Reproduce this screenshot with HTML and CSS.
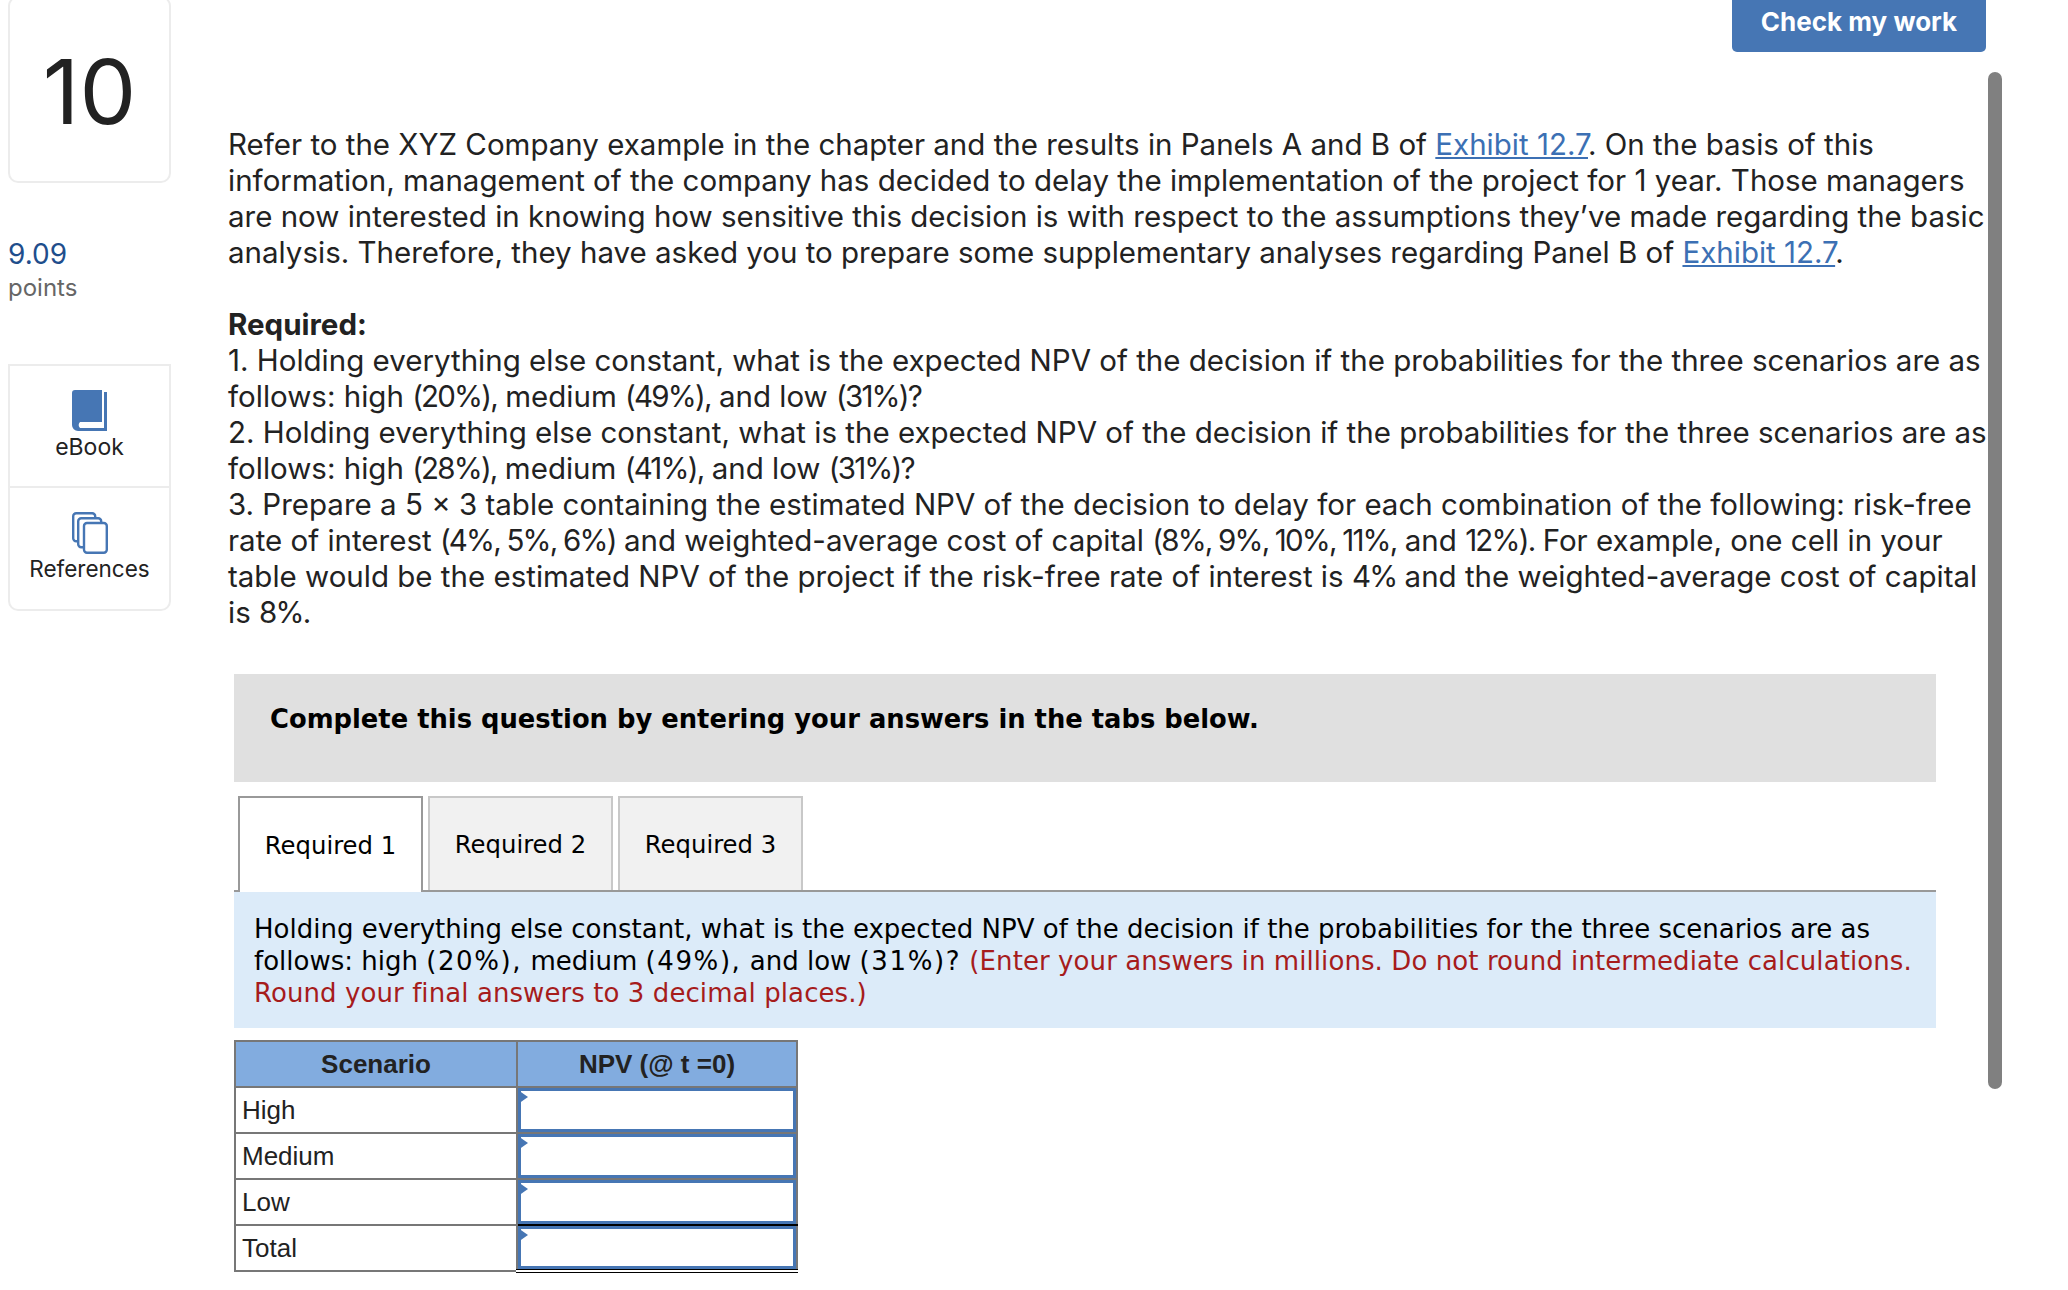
FILE: index.html
```html
<!DOCTYPE html>
<html>
<head>
    <meta name="viewport" content="width=device-width, initial-scale=1.0">
    <title>Question 10</title>
    <link rel="stylesheet" href="styles.css">
</head>
<body>
    <div class="page">
        <div class="side">
            <div class="qnum">10</div>
            <div class="pts">9.09</div>
            <div class="pts-label">points</div>
            <div class="tools">
                <div class="tool tool-first">
                    <svg class="tool-icon" width="36" height="42" viewBox="0 0 36 42">
                        <path d="M3 0h27v32H8a4.500 4.500 0 0 0 0 6h24V2h3v39H6a6 6 0 0 1-6-6V3a3 3 0 0 1 3-3z" fill="#4676b4"/>
                    </svg>
                    <span>eBook</span>
                </div>
                <div class="tool">
                    <svg class="tool-icon" width="36" height="42" viewBox="0 0 36 42" fill="#fff" stroke="#4676b4" stroke-width="2.400">
                        <rect x="1.200" y="1.200" width="22" height="28" rx="3"/>
                        <rect x="6.200" y="6.200" width="23" height="29" rx="3"/>
                        <rect x="12" y="11" width="22.800" height="29.800" rx="3"/>
                    </svg>
                    <span>References</span>
                </div>
            </div>
        </div>

        <div class="main">
            <div class="topbar">
                <button class="check">Check my work</button>
            </div>

            <div class="prompt">
                Refer to the XYZ Company example in the chapter and the results in Panels A and B of <a href="#">Exhibit 12.7</a>. On the basis of this<br>
                information, management of the company has decided to delay the implementation of the project for 1 year. Those managers<br>
                are now interested in knowing how sensitive this decision is with respect to the assumptions they’ve made regarding the basic<br>
                analysis. Therefore, they have asked you to prepare some supplementary analyses regarding Panel B of <a href="#">Exhibit 12.7</a>.<br>
                <br>
                <b>Required:</b><br>
                1. Holding everything else constant, what is the expected NPV of the decision if the probabilities for the three scenarios are as<br>
                follows: high <span class="n">(20%),</span> medium <span class="n">(49%),</span> and low <span class="n">(31%)?</span><br>
                2. Holding everything else constant, what is the expected NPV of the decision if the probabilities for the three scenarios are as<br>
                follows: high <span class="n">(28%),</span> medium <span class="n">(41%),</span> and low <span class="n">(31%)?</span><br>
                3. Prepare a 5 × 3 table containing the estimated NPV of the decision to delay for each combination of the following: risk-free<br>
                rate of interest <span class="n">(4%, 5%, 6%)</span> and weighted-average cost of capital <span class="n">(8%, 9%, 10%, 11%,</span> and <span class="n">12%).</span> For example, one cell in your<br>
                table would be the estimated NPV of the project if the risk-free rate of interest is <span class="n">4%</span> and the weighted-average cost of capital<br>
                is <span class="n">8%.</span>
            </div>

            <div class="work">
                <div class="notice">Complete this question by entering your answers in the tabs below.</div>

                <div class="tabs">
                    <div class="tab active">Required 1</div>
                    <div class="tab">Required 2</div>
                    <div class="tab">Required 3</div>
                </div>

                <div class="panel">
                    Holding everything else constant, what is the expected NPV of the decision if the probabilities for the three scenarios are as<br>
                    follows: high <span class="w">(20%),</span> medium <span class="w">(49%),</span> and low <span class="w">(31%)?</span> <span class="hint">(Enter your answers in millions. Do not round intermediate calculations.<br>
                    Round your final answers to 3 decimal places.)</span>
                </div>

                <table class="npv">
                    <tr>
                        <th class="col-a">Scenario</th>
                        <th class="col-b">NPV (@ t =0)</th>
                    </tr>
                    <tr>
                        <td>High</td>
                        <td class="entry"><input type="text"></td>
                    </tr>
                    <tr>
                        <td>Medium</td>
                        <td class="entry"><input type="text"></td>
                    </tr>
                    <tr>
                        <td>Low</td>
                        <td class="entry sub"><input type="text"></td>
                    </tr>
                    <tr>
                        <td>Total</td>
                        <td class="entry total"><input type="text"></td>
                    </tr>
                </table>
            </div>
        </div>

        <div class="scrollbar"></div>
    </div>
</body>
</html>
```

FILE: styles.css
```css
html, body {
    margin: 0;
    padding: 0;
    height: 100%;
    background: #fff;
}
.page {
    position: relative;
    display: flex;
    height: 1290px;
    overflow: hidden;
    font-family: 'Inter', sans-serif;
    color: #222;
}
.side {
    width: 220px;
    margin-left: 8px;
    flex-shrink: 0;
}
.qnum {
    width: 163px;
    height: 187px;
    margin-top: -4px;
    padding-top: 4px;
    box-sizing: border-box;
    border: 2px solid #ececec;
    border-radius: 10px;
    display: flex;
    justify-content: center;
    align-items: center;
    font-size: 90px;
    color: #222;
}
.pts {
    margin-top: 53px;
    font-size: 28px;
    line-height: 36px;
    color: #1f4e8c;
}
.pts-label {
    margin-top: 1px;
    font-size: 24px;
    line-height: 30px;
    color: #666;
}
.tools {
    width: 163px;
    margin-top: 61px;
    box-sizing: border-box;
    border: 2px solid #ececec;
    border-radius: 0 0 10px 10px;
}
.tool {
    height: 121px;
    display: flex;
    flex-direction: column;
    align-items: center;
    padding-top: 24px;
    box-sizing: border-box;
    font-size: 22.500px;
    line-height: 30px;
}
.tool-first {
    border-bottom: 2px solid #ececec;
    height: 122px;
    font-size: 23px;
}
.tool-icon {
    flex-shrink: 0;
}
.main {
    flex: 0 0 1758px;
    width: 1758px;
}
.topbar {
    height: 52px;
    display: flex;
    justify-content: flex-end;
}
.check {
    width: 254px;
    height: 52px;
    border: none;
    border-radius: 0 0 5px 5px;
    background: #4676b4;
    color: #fff;
    font-family: 'Inter', sans-serif;
    font-size: 26px;
    font-weight: bold;
    padding: 0 0 10px;
}
.prompt {
    margin-top: 74px;
    font-size: 29.500px;
    line-height: 36px;
    white-space: nowrap;
    color: #222;
}
.prompt a {
    color: #3c70b4;
}
.prompt .n {
    letter-spacing: -1.800px;
}
.work {
    width: 1702px;
    margin: 44px 0 0 6px;
}
.notice {
    height: 108px;
    box-sizing: border-box;
    padding: 27px 36px 0;
    background: #e0e0e0;
    color: #000;
    font-family: 'DejaVu Sans', sans-serif;
    font-size: 25.800px;
    line-height: 36px;
    font-weight: bold;
}
.tabs {
    display: flex;
    gap: 5px;
    margin-top: 14px;
    padding-left: 4px;
    height: 96px;
    box-sizing: border-box;
    border-bottom: 2px solid #999;
}
.tab {
    width: 185px;
    height: 94px;
    box-sizing: border-box;
    border: 2px solid #c8c8c8;
    border-bottom: none;
    background: #f1f1f1;
    display: flex;
    justify-content: center;
    align-items: center;
    font-family: 'DejaVu Sans', sans-serif;
    font-size: 24.300px;
    color: #000;
}
.tab.active {
    height: 96px;
    border-color: #999;
    background: #fff;
}
.panel {
    height: 136px;
    box-sizing: border-box;
    padding: 21px 20px 0;
    background: #dcebf9;
    font-family: 'DejaVu Sans', sans-serif;
    font-size: 26px;
    line-height: 32px;
    white-space: nowrap;
    color: #000;
}
.panel .w {
    letter-spacing: 1.600px;
}
.hint {
    color: #a61c1c;
    letter-spacing: 0.080px;
}
.npv {
    margin-top: 12px;
    border-collapse: collapse;
    font-family: 'Liberation Sans', sans-serif;
    font-size: 26px;
    color: #222;
}
.npv th, .npv td {
    border: 2px solid #777;
    padding: 0 6px;
    height: 44px;
    box-sizing: content-box;
    text-align: left;
    font-weight: normal;
}
.npv th {
    background: #82acdf;
    font-weight: bold;
    text-align: center;
}
.col-a {
    width: 268px;
}
.col-b {
    width: 266px;
}
.npv td.entry {
    position: relative;
    padding: 0;
}
.entry input {
    display: block;
    width: 100%;
    height: 44px;
    box-sizing: border-box;
    border: 3px solid #4676b4;
    outline: none;
    background: #fff;
}
.entry::before {
    content: "";
    position: absolute;
    left: 0;
    top: 2px;
    border-left: 10px solid #4676b4;
    border-top: 7px solid transparent;
    border-bottom: 7px solid transparent;
}
.npv td.sub {
    border-bottom: 2px solid #000;
}
.npv td.total {
    border-bottom: 4px double #000;
    height: 43px;
}
.npv td.total input {
    height: 43px;
}
.scrollbar {
    position: absolute;
    left: 1988px;
    top: 72px;
    width: 14px;
    height: 1017px;
    border-radius: 7px;
    background: #808080;
}
```
